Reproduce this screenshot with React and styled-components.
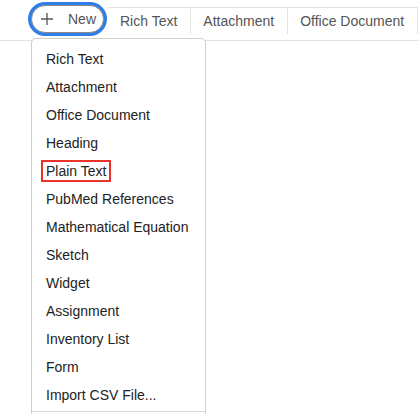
import React from "react";
import styled, { createGlobalStyle } from "styled-components";

const items = [
  "Rich Text",
  "Attachment",
  "Office Document",
  "Heading",
  "Plain Text",
  "PubMed References",
  "Mathematical Equation",
  "Sketch",
  "Widget",
  "Assignment",
  "Inventory List",
  "Form",
  "Import CSV File...",
];

const tabs = ["Rich Text", "Attachment", "Office Document"];

const GlobalStyle = createGlobalStyle`
  html, body {
    margin: 0;
    background: #fff;
    overflow: hidden;
  }
  body {
    font-family: "Liberation Sans", Arial, sans-serif;
    font-size: 14px;
  }
`;

const Page = styled.div`
  position: relative;
  height: 414px;
`;

const Toolbar = styled.div`
  display: flex;
  align-items: flex-start;
  padding: 5px 0 0 31px;
  height: 41px;
  box-sizing: border-box;
  border-bottom: 1px solid #e3e3e3;
`;

const NewButton = styled.button`
  display: flex;
  align-items: center;
  gap: 15px;
  height: 28px;
  width: 73px;
  box-sizing: border-box;
  padding: 0 0 0 9px;
  border: 1px solid #8a8a8a;
  border-radius: 14px;
  background: #fff;
  box-shadow: 0 0 0 3px #2e7ee8;
  color: #555;
  font-family: inherit;
  font-size: 14px;
  margin-right: 4px;
`;

const TabRow = styled.div`
  display: flex;
  margin-top: 2px;
`;

const Tab = styled.div`
  height: 26px;
  display: flex;
  align-items: center;
  padding: 0 13px 0 12px;
  border-top: 1px solid #e3e3e3;
  border-right: 1px solid #e3e3e3;
  color: #555;
  white-space: nowrap;
`;

const Menu = styled.div`
  position: absolute;
  top: 38px;
  left: 31px;
  width: 175px;
  box-sizing: border-box;
  border: 1px solid #cfcfcf;
  border-radius: 5px;
  background: #fff;
  padding: 6px 0;
`;

const Item = styled.div`
  height: 28px;
  display: flex;
  align-items: center;
  padding-left: 14px;
  color: #222;
  white-space: nowrap;
`;

const Label = styled.span`
  ${({ $marked }) =>
    $marked &&
    `
    display: inline-block;
    border: 2px solid #e8322a;
    padding: 1px 3px;
    margin-left: -5px;
  `}
`;

const Separator = styled.div`
  height: 1px;
  background: #d6d6d6;
  margin: 2px 0 20px;
`;

const PlusIcon = () => (
  <svg width="12" height="12" viewBox="0 0 12 12">
    <path d="M6 0v12M0 6h12" stroke="#555" strokeWidth="1.3" />
  </svg>
);

export default function App() {
  return (
    <Page>
      <GlobalStyle />
      <Toolbar>
        <NewButton>
          <PlusIcon />
          New
        </NewButton>
        <TabRow>
          {tabs.map((t) => (
            <Tab key={t}>{t}</Tab>
          ))}
        </TabRow>
      </Toolbar>
      <Menu>
        {items.map((it) => (
          <Item key={it}>
            <Label $marked={it === "Plain Text"}>{it}</Label>
          </Item>
        ))}
        <Separator />
      </Menu>
    </Page>
  );
}
